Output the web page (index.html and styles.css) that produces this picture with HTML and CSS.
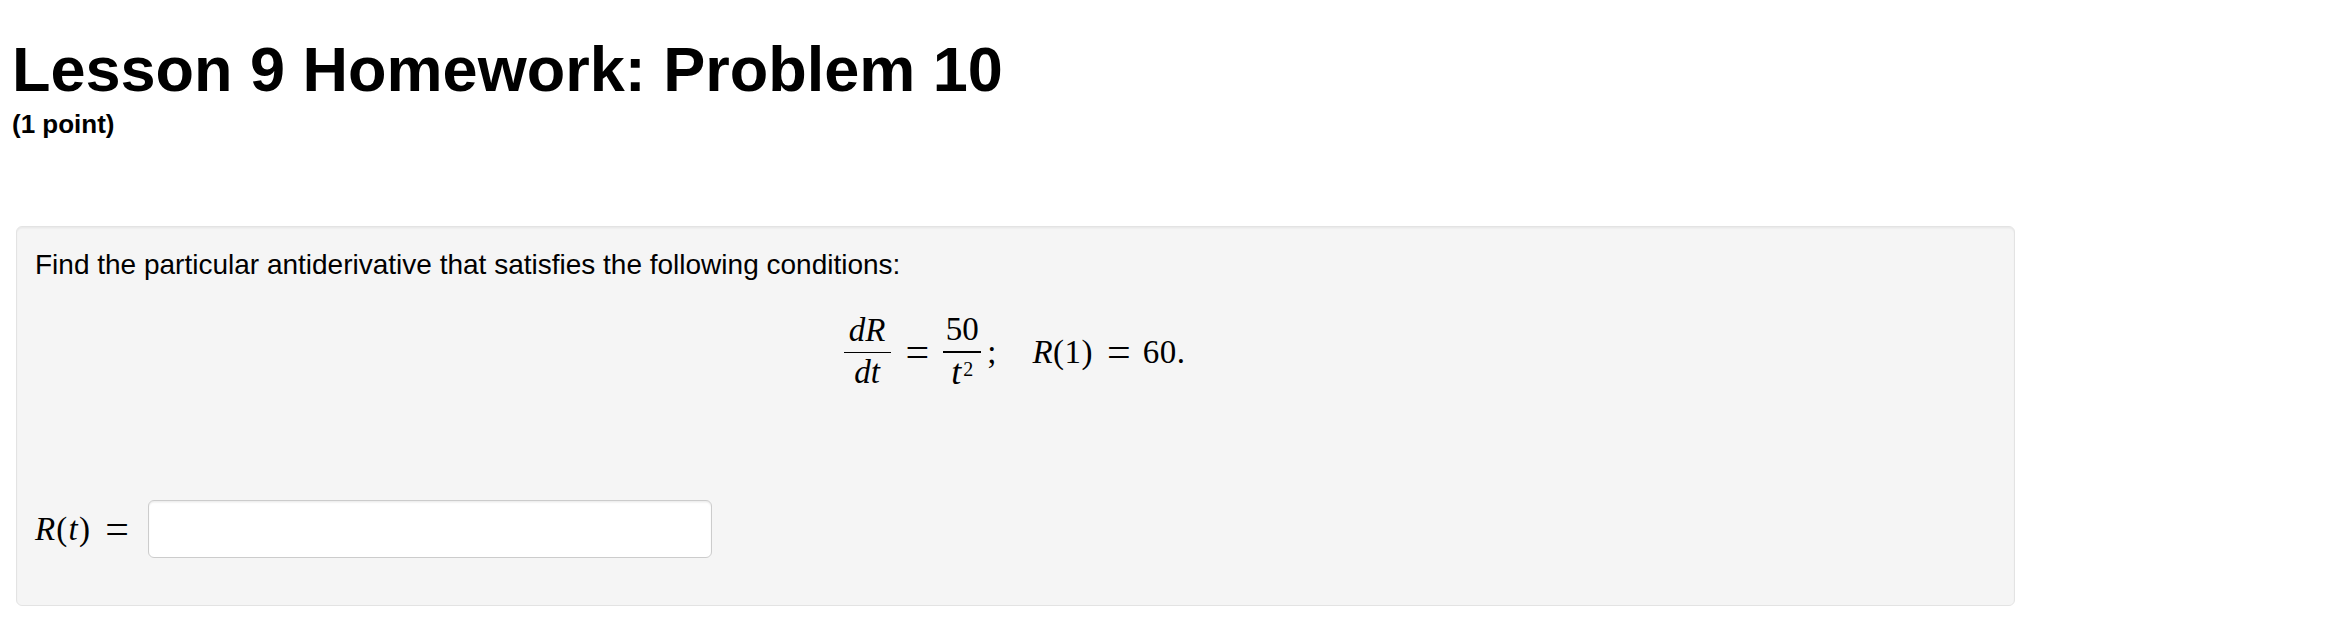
FILE: index.html
```html
<!DOCTYPE html>
<html lang="en">
<head>
<meta charset="utf-8">
<title>Lesson 9 Homework: Problem 10</title>
<link rel="stylesheet" href="styles.css">
</head>
<body>
<div class="page">
  <h1 class="title">Lesson 9 Homework: Problem 10</h1>
  <div class="points">(1 point)</div>
  <div class="well">
    <p class="prompt">Find the particular antiderivative that satisfies the following conditions:</p>
    <div class="display">
      <span class="frac frac1"><span class="num"><i>d</i><i>R</i></span><span class="bar"></span><span class="den"><i>d</i><i>t</i></span></span>
      <span class="rel rel1">=</span>
      <span class="frac frac2"><span class="num">50</span><span class="bar"></span><span class="den"><i class="tvar">t</i><sup class="sup">2</sup></span></span>
      <span class="punct">;</span>
      <span class="expr expr1"><i>R</i>(1)</span>
      <span class="rel rel2">=</span>
      <span class="expr expr2">60.</span>
    </div>
    <div class="answer">
      <span class="expr label"><i>R</i>(<i>t</i>)</span>
      <span class="rel rel3">=</span>
      <input class="field" type="text" aria-label="R(t)">
    </div>
  </div>
</div>
</body>
</html>
```
FILE: styles.css
```css
html, body {
  margin: 0;
  padding: 0;
  background: #ffffff;
}

.page {
  padding: 34px 0 0 12px;
  font-family: "Liberation Sans", Helvetica, Arial, sans-serif;
  color: #000;
}

.title {
  margin: 0;
  font-size: 63px;
  line-height: 70px;
  font-weight: bold;
}

.points {
  margin-top: 5px;
  font-size: 26px;
  line-height: 30px;
  font-weight: bold;
}

.well {
  box-sizing: border-box;
  width: 1999px;
  margin: 87px 0 0 4px;
  padding: 18px 18px 47px 18px;
  background: #f5f5f5;
  border: 1.5px solid #e3e3e3;
  border-radius: 6px;
  box-shadow: inset 0 1.5px 1.5px rgba(0, 0, 0, 0.05);
}

.prompt {
  margin: 0;
  font-size: 28px;
  line-height: 40px;
}

.display {
  display: flex;
  justify-content: center;
  align-items: center;
  margin-top: 27px;
  padding-right: 2px;
  font-family: "Liberation Serif", "Times New Roman", serif;
  font-size: 33px;
  line-height: 34px;
}

.display i, .answer i {
  font-style: italic;
}

.frac {
  display: inline-flex;
  flex-direction: column;
  align-items: center;
}

.frac1 { width: 47px; }
.frac2 { width: 38px; }

.num {
  padding-bottom: 5px;
  line-height: 34px;
}

.bar {
  align-self: stretch;
  height: 1.5px;
  background: #000;
}

.den {
  padding-top: 2px;
  padding-bottom: 3px;
  line-height: 34px;
}

.tvar {
  font-size: 36px;
}

.sup {
  margin-left: 2px;
  font-size: 20px;
  line-height: 0;
  vertical-align: 8px;
}

.rel {
  font-size: 42px;
  line-height: 34px;
}

.rel1 { margin: 0 14px 0 15px; }
.punct { margin: 0 0 0 6px; }
.expr1 { margin-left: 36px; letter-spacing: 0.5px; }
.rel2 { margin: 0 12px 0 14px; }
.expr2 { letter-spacing: 0.5px; }

.answer {
  display: flex;
  align-items: center;
  margin-top: 107px;
  font-family: "Liberation Serif", "Times New Roman", serif;
  font-size: 33px;
  line-height: 34px;
}

.label {
  letter-spacing: 1.2px;
}

.rel3 { margin: 0 19px 0 14px; }

.field {
  box-sizing: border-box;
  width: 564px;
  height: 58px;
  margin: 0;
  padding: 6px 12px;
  background: #fff;
  border: 1.5px solid #cccccc;
  border-radius: 6px;
  box-shadow: inset 0 1.5px 1.5px rgba(0, 0, 0, 0.075);
  font-family: "Liberation Sans", Helvetica, Arial, sans-serif;
  font-size: 21px;
  outline: none;
}
```
